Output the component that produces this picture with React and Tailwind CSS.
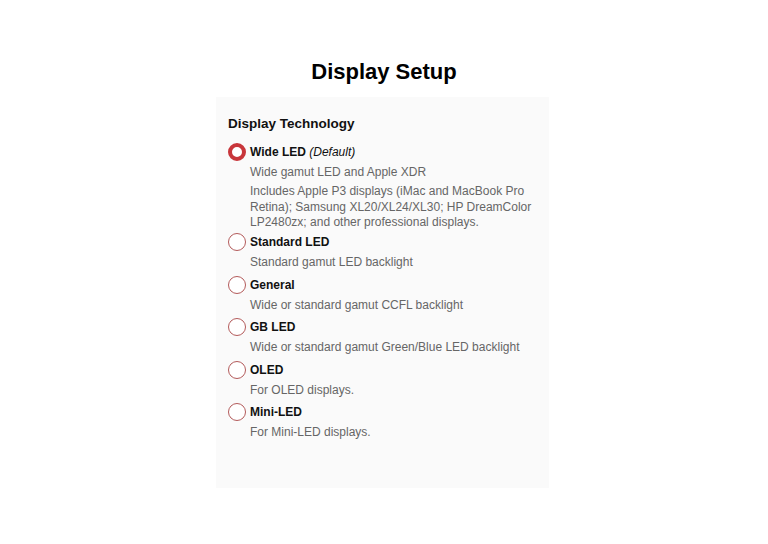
import React from "react";

const options = [
  {
    name: "Wide LED",
    extra: "(Default)",
    selected: true,
    desc: ["Wide gamut LED and Apple XDR"],
    more: "Includes Apple P3 displays (iMac and MacBook Pro Retina); Samsung XL20/XL24/XL30; HP DreamColor LP2480zx; and other professional displays.",
  },
  { name: "Standard LED", desc: ["Standard gamut LED backlight"] },
  { name: "General", desc: ["Wide or standard gamut CCFL backlight"] },
  { name: "GB LED", desc: ["Wide or standard gamut Green/Blue LED backlight"] },
  { name: "OLED", desc: ["For OLED displays."] },
  { name: "Mini-LED", desc: ["For Mini-LED displays."] },
];

function Radio({ selected }) {
  return selected ? (
    <span className="w-[18px] h-[18px] rounded-full border-[4px] border-[#c8363b] bg-white shrink-0" />
  ) : (
    <span className="w-[18px] h-[18px] rounded-full border-[1.5px] border-[#b35a5a] bg-white shrink-0" />
  );
}

export default function App() {
  return (
    <div
      className="w-[768px] h-[544px] bg-white flex flex-col items-center"
      style={{ fontFamily: '"Liberation Sans", Arial, sans-serif' }}
    >
      <h1 className="pt-[58px] text-[22px] leading-[28px] font-bold text-black">Display Setup</h1>
      <div className="mt-[11px] self-start ml-[216px] w-[333px] h-[391px] bg-[#fafafa] pl-[12px] pt-[17px]">
        <h2 className="text-[13.5px] leading-[20px] font-bold text-[#111]">Display Technology</h2>
        <div className="mt-[8px] flex flex-col">
          {options.map((o) => (
            <div key={o.name} className={o.more ? "flex flex-col pb-[1.5px]" : "flex flex-col pb-[3.5px]"}>
              <div className="flex items-center gap-[4px] h-[20px]">
                <Radio selected={o.selected} />
                <span className="text-[12px] font-bold text-[#111] leading-[20px]">
                  {o.name}
                  {o.extra && <span className="font-normal italic"> {o.extra}</span>}
                </span>
              </div>
              <div className="pl-[22px] text-[12px] text-[#666]">
                {o.desc.map((d) => (
                  <p key={d} className="mt-[2px] leading-[17px]">{d}</p>
                ))}
                {o.more && (
                  <p className="mt-[3px] leading-[15.5px] max-w-[288px]">{o.more}</p>
                )}
              </div>
            </div>
          ))}
        </div>
      </div>
    </div>
  );
}
